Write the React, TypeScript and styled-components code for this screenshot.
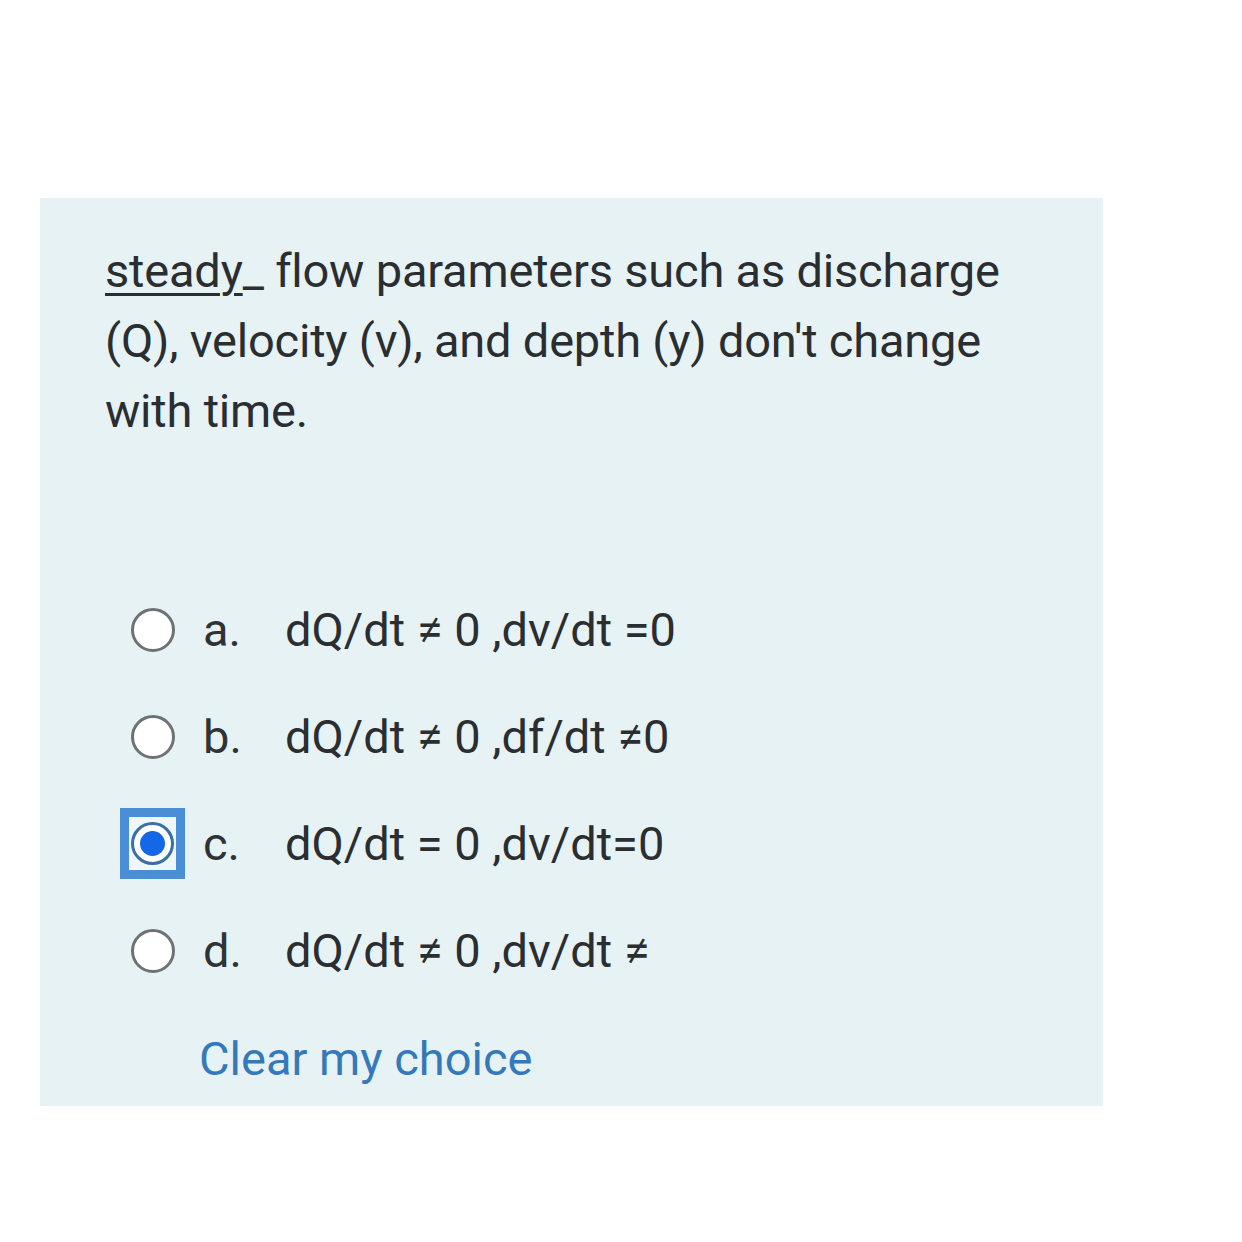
import React, { useState } from "react";
import styled, { createGlobalStyle } from "styled-components";

const GlobalStyle = createGlobalStyle`
  body {
    margin: 0;
    background: #ffffff;
    font-family: Roboto, "Liberation Sans", sans-serif;
  }
`;

const Page = styled.div`
  width: 1242px;
  height: 1242px;
  padding-top: 198px;
  padding-left: 40px;
  box-sizing: border-box;
`;

const Panel = styled.div`
  width: 1063px;
  height: 908px;
  background: #e7f2f5;
  box-sizing: border-box;
  padding: 38px 0 0 65px;
  color: #2a2e30;
`;

const Question = styled.div`
  font-size: 47px;
  line-height: 70px;
  width: 960px;
  letter-spacing: -0.2px;
  u {
    text-decoration-thickness: 3px;
    text-underline-offset: 6px;
  }
`;

const Options = styled.div`
  margin-top: 130px;
  margin-left: 15px;
  display: flex;
  flex-direction: column;
`;

const Row = styled.label`
  display: grid;
  grid-template-columns: 65px 64px auto;
  column-gap: 18px;
  align-items: center;
  height: 107px;
  font-size: 47px;
  cursor: pointer;
`;

const RadioCell = styled.span`
  display: flex;
  justify-content: center;
  align-items: center;
  height: 71px;
`;

const Radio = styled.span`
  width: 38px;
  height: 38px;
  border: 3px solid #6e7274;
  border-radius: 50%;
  background: #ffffff;
`;

const FocusBox = styled.span`
  width: 65px;
  height: 71px;
  box-sizing: border-box;
  border: 9px solid #4a8fd6;
  background: #eef7fa;
  display: flex;
  justify-content: center;
  align-items: center;
`;

const Checked = styled.span`
  width: 37px;
  height: 37px;
  border: 3px solid #3a6fa8;
  border-radius: 50%;
  background: #ffffff;
  display: flex;
  justify-content: center;
  align-items: center;
  &::after {
    content: "";
    width: 25px;
    height: 25px;
    border-radius: 50%;
    background: #1468e6;
  }
`;

const Letter = styled.span`
  color: #2f3335;
`;

const Answer = styled.span`
  white-space: pre;
`;

const ClearLink = styled.a`
  display: block;
  margin-top: 27px;
  margin-left: 94px;
  font-size: 47px;
  color: #3479ba;
  text-decoration: none;
`;

const options = [
  { key: "a.", text: "dQ/dt \u2260 0 ,dv/dt =0" },
  { key: "b.", text: "dQ/dt \u2260 0 ,df/dt \u22600" },
  { key: "c.", text: "dQ/dt = 0 ,dv/dt=0" },
  { key: "d.", text: "dQ/dt \u2260 0 ,dv/dt \u2260" },
];

export default function App() {
  const [selected, setSelected] = useState<number | null>(2);

  return (
    <Page>
      <GlobalStyle />
      <Panel>
        <Question>
          <u>steady</u>_ flow parameters such as discharge (Q), velocity (v), and depth (y) don't change with time.
        </Question>
        <Options>
          {options.map((o, i) => (
            <Row key={o.key} onClick={() => setSelected(i)}>
              <RadioCell>
                {selected === i ? (
                  <FocusBox>
                    <Checked />
                  </FocusBox>
                ) : (
                  <Radio />
                )}
              </RadioCell>
              <Letter>{o.key}</Letter>
              <Answer>{o.text}</Answer>
            </Row>
          ))}
        </Options>
        <ClearLink href="#" onClick={(e) => { e.preventDefault(); setSelected(null); }}>
          Clear my choice
        </ClearLink>
      </Panel>
    </Page>
  );
}
